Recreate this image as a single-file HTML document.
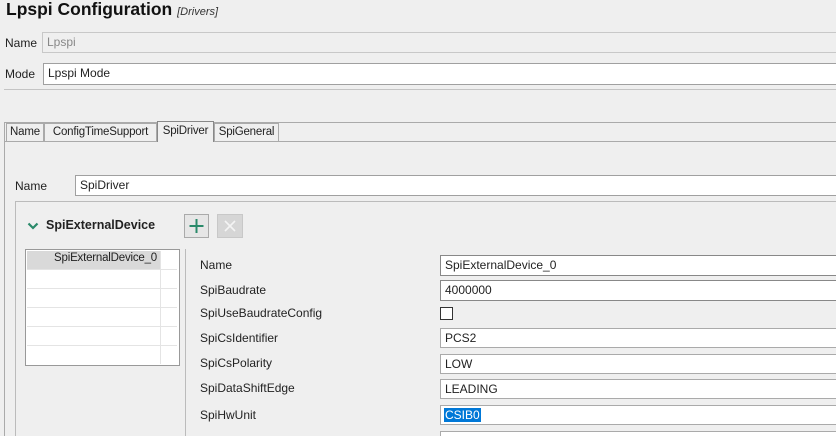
<!DOCTYPE html>
<html><head><style>
html,body{margin:0;width:836px;height:436px;overflow:hidden}
body{background:#efefef;position:relative;font-family:"Liberation Sans","Noto Sans CJK KR",sans-serif;font-size:12px;color:#222}
.a{position:absolute}
.in{position:absolute;background:#fff;border:1px solid #a0a0a0;box-sizing:border-box;padding:1px 0 0 4px;line-height:16px;white-space:nowrap}
.lbl{position:absolute;line-height:14px;white-space:nowrap}
.tab{position:absolute;top:123px;height:18px;border:1px solid #aaa;border-bottom:none;box-sizing:border-box;padding:0;text-align:center;line-height:17px;background:#efefef;font-size:11.5px;letter-spacing:-0.2px;white-space:nowrap}
.row{position:absolute;left:27px;width:150px;height:1px;background:#e4e4e4}
</style></head><body>
<div class="a" style="left:6px;top:-1px;font-size:17.5px;font-weight:bold;color:#111">Lpspi Configuration <span style="font-size:11px;font-weight:normal;font-style:italic;color:#333">[Drivers]</span></div>
<div class="lbl" style="left:5px;top:36px">Name</div>
<div class="in" style="left:42px;top:32px;width:800px;height:21px;background:#efefef;border-color:#c8c8c8;color:#888">Lpspi</div>
<div class="lbl" style="left:5px;top:67px">Mode</div>
<div class="in" style="left:43px;top:63px;width:800px;height:22px">Lpspi Mode</div>
<div class="a" style="left:4px;top:89px;width:832px;height:1px;background:#c4c4c4"></div>
<div class="a" style="left:4px;top:122px;width:832px;height:1px;background:#aaa"></div>
<div class="a" style="left:4px;top:141px;width:832px;height:1px;background:#aaa"></div>
<div class="a" style="left:4px;top:122px;width:1px;height:314px;background:#aaa"></div>
<div class="tab" style="left:6px;width:38px">Name</div>
<div class="tab" style="left:44px;width:113px">ConfigTimeSupport</div>
<div class="tab" style="left:157px;width:57px;top:121px;height:21px;background:#efefef;border-color:#888;line-height:19px">SpiDriver</div>
<div class="tab" style="left:214px;width:65px">SpiGeneral</div>
<div class="lbl" style="left:15px;top:179px">Name</div>
<div class="in" style="left:75px;top:175px;width:780px;height:21px">SpiDriver</div>
<div class="a" style="left:15px;top:201px;width:821px;height:1px;background:#bbb"></div>
<div class="a" style="left:15px;top:201px;width:1px;height:235px;background:#bbb"></div>
<svg class="a" style="left:27px;top:221px" width="12" height="10"><path d="M1.5 2.5 L6 7 L10.5 2.5" stroke="#2a8a6a" stroke-width="2.2" fill="none"/></svg>
<div class="a" style="left:46px;top:218px;font-weight:bold;font-size:12.5px">SpiExternalDevice</div>
<div class="a" style="left:184px;top:214px;width:25px;height:24px;box-sizing:border-box;border:1px solid #aaa;background:#e6e6e6"></div>
<svg class="a" style="left:184px;top:214px" width="25" height="24"><path d="M12.5 5 V19 M5.5 12 H19.5" stroke="#2a8a6a" stroke-width="2"/></svg>
<div class="a" style="left:217px;top:214px;width:26px;height:24px;box-sizing:border-box;border:1px solid #c8c8c8;background:#d6d6d6"></div>
<svg class="a" style="left:217px;top:214px" width="26" height="24"><path d="M8 7 L18 17 M18 7 L8 17" stroke="#f4f4f4" stroke-width="1.6"/></svg>
<div class="a" style="left:25px;top:249px;width:155px;height:117px;box-sizing:border-box;border:1px solid #999;background:#fff"></div>
<div class="a" style="left:27px;top:251px;width:133px;height:18px;background:#d9d9d9"></div>
<div class="a" style="left:160px;top:251px;width:1px;height:113px;background:#e4e4e4"></div>
<div class="a" style="left:27px;width:130px;text-align:right;top:252px;font-size:11.5px;letter-spacing:-0.2px;white-space:nowrap">SpiExternalDevice_0</div>
<div class="row" style="top:269px"></div><div class="row" style="top:288px"></div><div class="row" style="top:307px"></div><div class="row" style="top:326px"></div><div class="row" style="top:345px"></div>
<div class="a" style="left:185px;top:249px;width:1px;height:187px;background:#bbb"></div>
<div class="lbl" style="left:200px;top:258px">Name</div>
<div class="lbl" style="left:200px;top:283px">SpiBaudrate</div>
<div class="lbl" style="left:200px;top:306px">SpiUseBaudrateConfig</div>
<div class="lbl" style="left:200px;top:331px">SpiCsIdentifier</div>
<div class="lbl" style="left:200px;top:356px">SpiCsPolarity</div>
<div class="lbl" style="left:200px;top:381px">SpiDataShiftEdge</div>
<div class="lbl" style="left:200px;top:408px">SpiHwUnit</div>
<div class="in" style="left:440px;top:255px;width:400px;height:21px;border-color:#888">SpiExternalDevice_0</div>
<div class="in" style="left:440px;top:280px;width:400px;height:21px;border-color:#888">4000000</div>
<div class="a" style="left:440px;top:307px;width:13px;height:13px;box-sizing:border-box;border:1px solid #333;background:#fff"></div>
<div class="in" style="left:440px;top:328px;width:400px;height:20px;border-color:#aaa">PCS2</div>
<div class="in" style="left:440px;top:354px;width:400px;height:20px;border-color:#aaa">LOW</div>
<div class="in" style="left:440px;top:379px;width:400px;height:20px;border-color:#aaa">LEADING</div>
<div class="in" style="left:440px;top:405px;width:400px;height:20px;border-color:#aaa;padding-left:3px"><span style="background:#0078d7;color:#fff;padding:0 1px">CSIB0</span></div>
<div class="in" style="left:440px;top:431px;width:400px;height:5px;border-color:#aaa;border-bottom:none"></div>
</body></html>
